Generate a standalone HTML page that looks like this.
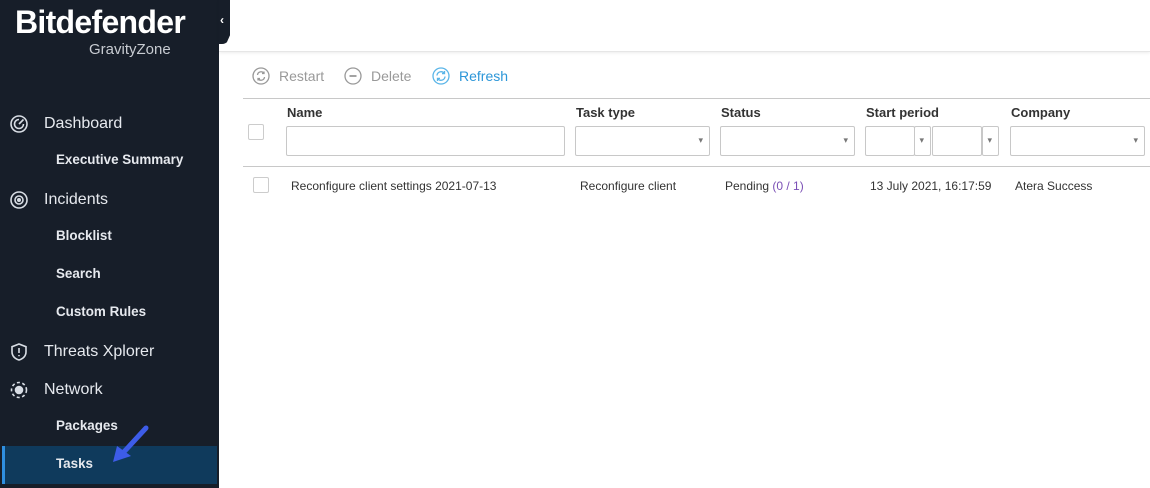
<!DOCTYPE html>
<html><head><style>
*{margin:0;padding:0;box-sizing:border-box}
body{width:1150px;height:488px;background:#fff;font-family:"Liberation Sans",sans-serif;position:relative;overflow:hidden}
.sb{position:absolute;left:0;top:0;width:219px;height:488px;background:#171e29}
.tab{position:absolute;left:217px;top:0;width:13px;height:44px;background:#171e29;border-radius:0 0 8px 0;clip-path:polygon(0 0,100% 0,100% 80%,70% 100%,0 100%)}
.tab span{position:absolute;left:3px;top:13px;color:#fff;font-size:12px;font-weight:bold}
.logo{position:absolute;left:15px;top:4px;color:#fff;font-size:32px;font-weight:bold;letter-spacing:-0.7px}
.gz{position:absolute;left:89px;top:41px;color:#c8ccd2;font-size:15px}
.m{position:absolute;left:44px;color:#e6e9ee;font-size:16px}
.s{position:absolute;left:56px;color:#e6e9ee;font-size:13.4px;font-weight:bold}
.ic{position:absolute;left:9px;width:20px;height:20px}
.sel{position:absolute;left:2px;top:446px;width:215px;height:38px;background:#0f3a5c;border-left:3px solid #2f8fe0}
.hdr{position:absolute;left:219px;top:0;right:0;height:52px;border-bottom:1px solid #e6e6e6;box-shadow:0 1px 3px rgba(0,0,0,.08)}
.tb{position:absolute;top:67px;font-size:14px;color:#999}
.tb svg{vertical-align:-4px;margin-right:9px}
.line{position:absolute;left:243px;right:0;height:1px;background:#c8c8c8}
.th{position:absolute;top:105px;font-size:13px;font-weight:bold;color:#333}
.in{position:absolute;top:126px;height:30px;border:1px solid #c8c8c8;border-radius:2px}
.dd:after{content:"▾";position:absolute;right:6px;top:8px;font-size:9px;color:#777}
.cb{position:absolute;width:16px;height:16px;border:1px solid #ccc;border-radius:2px}
.td{position:absolute;top:179px;font-size:12px;color:#333}
</style></head><body>
<div class="sb">
<div class="logo">Bitdefender</div>
<div class="gz">GravityZone</div>
<svg class="ic" style="top:114px" viewBox="0 0 20 20" fill="none" stroke="#d8dde4" stroke-width="1.6"><circle cx="10" cy="10" r="8"/><path d="M10 5.5a4.5 4.5 0 1 0 4.5 4.5"/><path d="M10 10l4.5-4.5"/></svg>
<div class="m" style="top:115px">Dashboard</div>
<div class="s" style="top:152px">Executive Summary</div>
<svg class="ic" style="top:190px" viewBox="0 0 20 20" fill="none" stroke="#d8dde4" stroke-width="1.6"><circle cx="10" cy="10" r="8"/><circle cx="10" cy="10" r="4"/><circle cx="10" cy="10" r="1.2" fill="#d8dde4"/></svg>
<div class="m" style="top:191px">Incidents</div>
<div class="s" style="top:228px">Blocklist</div>
<div class="s" style="top:266px">Search</div>
<div class="s" style="top:304px">Custom Rules</div>
<svg class="ic" style="top:342px" viewBox="0 0 20 20" fill="none" stroke="#d8dde4" stroke-width="1.6"><path d="M10 2l7 2.7v5c0 4.3-3.2 7-7 8.3-3.8-1.3-7-4-7-8.3v-5z"/><path d="M10 6v5M10 13v1.2"/></svg>
<div class="m" style="top:343px">Threats Xplorer</div>
<svg class="ic" style="top:380px" viewBox="0 0 20 20" fill="none" stroke="#d8dde4" stroke-width="1.6"><circle cx="10" cy="10" r="3.5" fill="#d8dde4"/><circle cx="10" cy="10" r="7.5" stroke-dasharray="3 2.5"/></svg>
<div class="m" style="top:381px">Network</div>
<div class="s" style="top:418px">Packages</div>
<div class="sel"></div>
<div class="s" style="top:456px">Tasks</div>
<svg style="position:absolute;left:108px;top:424px" width="44" height="42" viewBox="0 0 44 42"><path d="M38 4L14 30" stroke="#3d5ce8" stroke-width="5" stroke-linecap="round"/><path d="M5 38l4-16 14 10z" fill="#3d5ce8"/></svg>
</div>
<div class="tab"><span>‹</span></div>
<div class="hdr"></div>
<div class="tb" style="left:252px"><svg width="18" height="18" viewBox="0 0 18 18" fill="none" stroke="#999" stroke-width="1.3"><circle cx="9" cy="9" r="8"/><path d="M5.5 8a3.5 3.5 0 0 1 6.5-1.5M12.5 10a3.5 3.5 0 0 1-6.5 1.5M12 4.5v2h-2M6 13.5v-2h2"/></svg>Restart</div>
<div class="tb" style="left:344px"><svg width="18" height="18" viewBox="0 0 18 18" fill="none" stroke="#999" stroke-width="1.3"><circle cx="9" cy="9" r="8"/><path d="M5.5 9h7" stroke-width="1.8"/></svg>Delete</div>
<div class="tb" style="left:432px;color:#2b96d8"><svg width="18" height="18" viewBox="0 0 18 18" fill="none" stroke="#5ab5e8" stroke-width="1.3"><circle cx="9" cy="9" r="8"/><path d="M5 8.5a4 4 0 0 1 7.3-2M13 9.5a4 4 0 0 1-7.3 2M12.5 4v2.6H10M5.5 14v-2.6H8"/></svg>Refresh</div>
<div class="line" style="top:98px"></div>
<div class="line" style="top:166px"></div>
<div class="th" style="left:287px">Name</div>
<div class="th" style="left:576px">Task type</div>
<div class="th" style="left:721px">Status</div>
<div class="th" style="left:866px">Start period</div>
<div class="th" style="left:1011px">Company</div>
<div class="cb" style="left:248px;top:124px"></div>
<div class="in" style="left:286px;width:279px"></div>
<div class="in dd" style="left:575px;width:135px"></div>
<div class="in dd" style="left:720px;width:135px"></div>
<div class="in" style="left:865px;width:50px"></div>
<div class="in dd" style="left:914px;width:17px;border-left:1px solid #c8c8c8"></div>
<div class="in" style="left:932px;width:50px"></div>
<div class="in dd" style="left:982px;width:17px"></div>
<div class="in dd" style="left:1010px;width:135px"></div>
<div class="cb" style="left:253px;top:177px"></div>
<div class="td" style="left:291px">Reconfigure client settings 2021-07-13</div>
<div class="td" style="left:580px">Reconfigure client</div>
<div class="td" style="left:725px">Pending <span style="color:#7a4fb5">(0 / 1)</span></div>
<div class="td" style="left:870px">13 July 2021, 16:17:59</div>
<div class="td" style="left:1015px">Atera Success</div>
</body></html>
